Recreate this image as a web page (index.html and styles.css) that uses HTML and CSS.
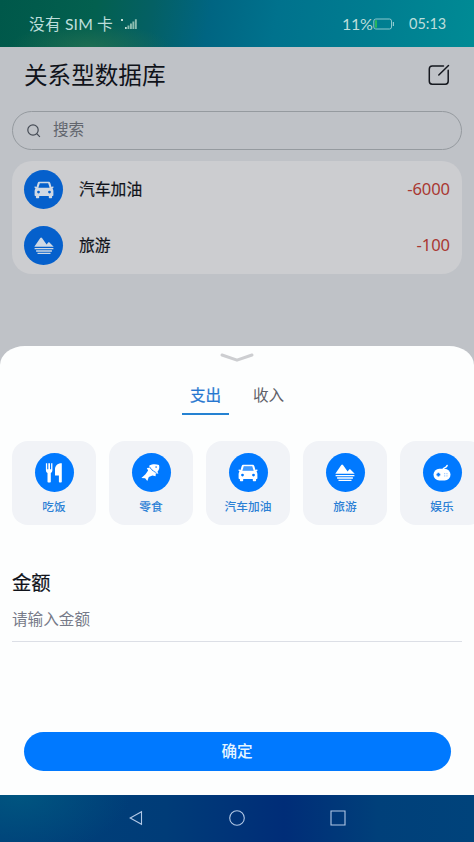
FILE: index.html
```html
<!DOCTYPE html>
<html lang="zh-CN">
<head>
<meta charset="utf-8">
<title>关系型数据库</title>
<link rel="stylesheet" href="styles.css">
</head>
<body>
<svg class="defs" width="0" height="0" aria-hidden="true">
  <symbol id="car" viewBox="0 0 20 20">
    <path fill="currentColor" fill-rule="evenodd" d="M5.600 1.700h8.800c1 0 1.600.5 1.900 1.400l1.200 4 1.200-.5c.8-.2 1.200.6.600 1.100l-.8.800c.6.700.9 1.500.9 2.500v4.300c0 .4-.3.700-.7.700h-.6v1.300c0 .6-.4 1-1 1h-1.300c-.6 0-1-.4-1-1V16H5.200v1.300c0 .6-.4 1-1 1H2.900c-.6 0-1-.4-1-1V16h-.6c-.4 0-.7-.3-.7-.7V11c0-1 .3-1.800.9-2.500l-.8-.8C.1 7.200.5 6.400 1.300 6.600l1.200.5 1.200-4c.3-.9.900-1.400 1.900-1.400zM5.800 3.200 4.400 7.800h11.200l-1.400-4.600zM4.500 10.700a1.400 1.400 0 1 0 0 2.800 1.400 1.400 0 0 0 0-2.800zm11 0a1.400 1.400 0 1 0 0 2.800 1.400 1.400 0 0 0 0-2.800z"/>
  </symbol>
  <symbol id="car-solid" viewBox="0 0 20 20">
    <use href="#car"/>
    <path fill="currentColor" opacity=".25" d="M5.800 3.200 4.400 7.800h11.200l-1.400-4.600z"/>
  </symbol>
  <symbol id="travel" viewBox="0 0 20 20">
    <path fill="currentColor" d="M.3 10.800 6.300 2c.5-.7 1.200-.7 1.700 0l4.600 6.500 1.400-1.700c.5-.6 1.200-.6 1.700 0l4 4zM.6 11.900h18.800v1.400H.6zM2.100 14.300h15.800v1.400H2.100zM3.500 16.700h13v1.400h-13z"/>
  </symbol>
  <symbol id="meal" viewBox="0 0 20 20">
    <path fill="currentColor" d="M1.900.3h1.300v5.900h1.100V.3h1.700v5.900h1.100V.3h1.300v6.600c0 1.500-.6 2.500-1.600 3v8.900c0 .5-.3.800-.8.800H4.300c-.5 0-.8-.3-.8-.8V9.900c-1-.5-1.600-1.500-1.600-3zM17.800.3v18.500c0 .5-.3.800-.8.800h-1.300c-.5 0-.8-.3-.8-.8v-6.200H11V6.300C11 3 13.400.2 17.800.3z"/>
  </symbol>
  <symbol id="fish" viewBox="0 0 20 20">
    <path fill="currentColor" d="M8.300 2.600C11.500.7 15 .9 18 2c.8 2.700.1 4.900-1.500 6.700l.9 2-2.600-.4-.2 2.900-3.200-.6-3.600 1.300-1.500 4.200-2.200-2.900-3.700-.2 4.100-3.700 2.600-3.900L5.800 5l2.700-.3z"/>
    <path fill="none" stroke="#0879fc" stroke-width="1" d="M9 4.300c.3 1.800 1.700 1.300 2 2.500s1.500.6 1.900 1.500 1.500.3 2.100 1.400"/>
    <circle cx="15.100" cy="4.100" r=".8" fill="#0879fc"/>
  </symbol>
  <symbol id="game" viewBox="0 0 20 20">
    <path fill="none" stroke="currentColor" stroke-width="1.500" stroke-linecap="round" d="M11 6.500c.3-2.500 3.500-1.200 4.100-4"/>
    <rect x="1.500" y="5.800" width="17" height="11.700" rx="5.800" fill="currentColor"/>
    <path fill="#0879fc" d="M5.500 9.700h1.800v1h1v1.800h-1v1H5.500v-1h-1v-1.800h1z"/>
    <path fill="#a9d0ff" d="M12 10h1.300v1.300H12zM14.300 10h1.300v1.300h-1.300zM12 12.300h1.300v1.300H12zM14.300 12.300h1.300v1.300h-1.300z"/>
  </symbol>
</svg>

<div class="phone">
  <div class="status">
    <span class="carrier">没有 SIM 卡</span>
    <svg class="signal" width="18" height="14" viewBox="0 0 18 14"><path fill="#bfdcd3" d="M1 2h2v2H1zM5 10h1.700v2H5z"/><path fill="#8bbdb0" d="M7.500 8.500h1.900V12H7.500zM10 6.500h1.900V12H10zM12.400 4.500h1.900V12h-1.900zM14.900 2.200h1.900V12h-1.900z"/></svg>
    <span class="percent">11%</span>
    <svg class="battery" width="22" height="12" viewBox="0 0 22 12"><rect x=".8" y="1" width="17.700" height="10" rx="2" fill="none" stroke="#8cc9ce"/><path d="M2 2.200h2v7.600H2z" fill="#29b65b"/><path d="M19.800 4h1.200v4h-1.200z" fill="#8cc9ce"/></svg>
    <span class="clock">05:13</span>
  </div>

  <main class="page">
    <header class="header">
      <h1>关系型数据库</h1>
      <svg width="22" height="22" viewBox="0 0 22 22" fill="none" stroke="#15181f" stroke-width="1.500" stroke-linecap="round"><path d="M15.500 2H4.200Q1.300 2 1.300 5v12.300q0 2.900 2.900 2.900h13.100q2.900 0 2.900-2.900V6.200M10.800 11 20.500 1.500"/></svg>
    </header>
    <div class="search">
      <svg width="14" height="14" viewBox="0 0 14 14" fill="none" stroke="#454b55" stroke-width="1.200"><circle cx="6" cy="6" r="5.200"/><path d="m9.700 9.700 3.200 3.200"/></svg>
      <span>搜索</span>
    </div>
    <div class="records">
      <div class="record">
        <span class="disc dim"><svg width="20" height="20"><use href="#car"/></svg></span>
        <span class="name">汽车加油</span><span class="amount">-6000</span>
      </div>
      <div class="record">
        <span class="disc dim"><svg width="20" height="20"><use href="#travel"/></svg></span>
        <span class="name">旅游</span><span class="amount">-100</span>
      </div>
    </div>
  </main>

  <section class="sheet">
    <svg class="handle" width="34" height="10" viewBox="0 0 34 10"><path d="M2 2 17 7.200 32 2" fill="none" stroke="#cdced1" stroke-width="3" stroke-linecap="round" stroke-linejoin="round"/></svg>
    <div class="tabs"><span class="tab active">支出</span><span class="tab">收入</span></div>
    <div class="categories">
      <div class="category"><span class="disc"><svg width="20" height="20"><use href="#meal"/></svg></span><span class="label">吃饭</span></div>
      <div class="category"><span class="disc"><svg width="20" height="20"><use href="#fish"/></svg></span><span class="label">零食</span></div>
      <div class="category"><span class="disc"><svg width="20" height="20"><use href="#car-solid"/></svg></span><span class="label">汽车加油</span></div>
      <div class="category"><span class="disc"><svg width="20" height="20"><use href="#travel"/></svg></span><span class="label">旅游</span></div>
      <div class="category"><span class="disc"><svg width="20" height="20"><use href="#game"/></svg></span><span class="label">娱乐</span></div>
    </div>
    <h2>金额</h2>
    <div class="field">请输入金额</div>
    <button class="submit">确定</button>
  </section>

  <nav class="navbar">
    <svg width="16" height="16" viewBox="0 0 16 16"><path d="M13.500 1.800v12.400L2.200 8z"/></svg>
    <svg width="16" height="16" viewBox="0 0 16 16"><circle cx="8" cy="8" r="7.300"/></svg>
    <svg width="16" height="16" viewBox="0 0 16 16"><path d="M1 1h14v14H1z"/></svg>
  </nav>
</div>
</body>
</html>
```
FILE: styles.css
```css
* { box-sizing: border-box; }

body {
  margin: 0;
  overflow: hidden;
  font-family: Roboto, "Noto Sans CJK SC", sans-serif;
  color: #10131a;
}

svg { display: block; flex: none; }
.defs { display: none; }
h1, h2 { margin: 0; font-weight: 400; white-space: nowrap; }

.phone {
  width: 474px;
  height: 842px;
  display: flex;
  flex-direction: column;
  background: #bfc2c7;
  overflow: hidden;
}

.status {
  height: 47px;
  flex: none;
  display: flex;
  align-items: center;
  padding-left: 29px;
  color: #bddedb;
  background:
    radial-gradient(ellipse 80px 24px at 90px 47px, rgba(43, 115, 83, .65), transparent),
    linear-gradient(100deg, #00584a 0%, #03604f 20%, #046064 32%, #006582 44%, #00728d 58%, #007d90 78%, #008b95 100%);
  white-space: nowrap;
}
.carrier { width: 90px; font: 15.800px/24px Lato, "Noto Sans CJK SC", sans-serif; letter-spacing: .1px; }
.signal { margin-left: 1px; }
.percent { width: 31px; margin-left: 204px; font: 16px/24px Lato, sans-serif; letter-spacing: -.3px; }
.clock { margin-left: 14px; font: 14.500px/24px Lato, sans-serif; }

.page { height: 299px; flex: none; padding: 0 12px; }
.header {
  height: 64px;
  display: flex;
  align-items: flex-start;
  justify-content: space-between;
  padding: 11px 12px 0;
}
h1 { font-size: 23.600px; line-height: 36px; }
.header svg { margin-top: 6px; }

.search {
  height: 39px;
  display: flex;
  align-items: center;
  gap: 12px;
  padding-left: 14px;
  border: 1px solid #959a9f;
  border-radius: 20px;
  color: #62666e;
  font-size: 15.600px;
  line-height: 24px;
}
.search span { padding-bottom: 1px; }

.records {
  margin-top: 11px;
  height: 113px;
  border-radius: 20px;
  background: #cccdd0;
}
.record { height: 56px; display: flex; align-items: center; padding: 0 12px; }
.record .disc { margin-top: 1px; }
.name { margin: 2px 0 0 16px; font-size: 15.800px; line-height: 24px; -webkit-text-stroke: .2px; }
.amount { margin-left: auto; color: #a93832; font: 16.600px/24px "Noto Sans", sans-serif; letter-spacing: -.1px; }

.disc {
  width: 39px;
  height: 39px;
  flex: none;
  display: flex;
  align-items: center;
  justify-content: center;
  border-radius: 50%;
  background: #0079ff;
  color: #fff;
}
.dim { background: #0560cc; color: #d0d9e4; }

.sheet {
  height: 449px;
  flex: none;
  padding: 7px 12px 0;
  border-radius: 25px 25px 0 0 / 19px 19px 0 0;
  background: #fdfefe;
}
.handle { margin: 0 auto; }
.tabs { display: flex; justify-content: center; gap: 16px; margin-top: 17px; }
.tab {
  width: 47px;
  height: 35px;
  border-bottom: 2px solid transparent;
  text-align: center;
  font-size: 15.600px;
  line-height: 32px;
  color: #5f6169;
}
.active { color: #2677d0; border-color: #2582d2; -webkit-text-stroke: .2px; }

.categories { display: flex; gap: 13px; margin-top: 26px; }
.category {
  width: 84px;
  height: 84px;
  flex: none;
  display: flex;
  flex-direction: column;
  align-items: center;
  padding-top: 12px;
  border-radius: 16px;
  background: #f1f3f7;
}
.label { margin-top: 6px; font-size: 11.700px; line-height: 18px; font-weight: 500; color: #2b80d5; white-space: nowrap; }

h2 { margin-top: 45px; font-size: 19.300px; line-height: 28px; -webkit-text-stroke: .2px; }
.field {
  height: 44px;
  border-bottom: 1px solid #dcdfe6;
  font-size: 15.600px;
  line-height: 44px;
  color: #767a88;
}
.submit {
  display: block;
  width: 427px;
  height: 39px;
  margin: 90px auto 0;
  padding: 0 0 3px;
  border: 0;
  border-radius: 20px;
  background: #0079ff;
  color: #e5f5ff;
  font: 500 15.600px/36px "Noto Sans CJK SC", sans-serif;
}

.navbar {
  height: 47px;
  flex: none;
  display: flex;
  justify-content: center;
  gap: 85px;
  padding-top: 15px;
  background:
    radial-gradient(ellipse 110px 60px at 20px 0, rgba(0, 96, 132, .65), transparent),
    linear-gradient(90deg, #004179 0%, #003c78 35%, #002d78 60%, #00407a 80%, #00437b 100%);
}
.navbar svg { fill: none; stroke: #b1c8e6; stroke-width: 1.100; }
```
